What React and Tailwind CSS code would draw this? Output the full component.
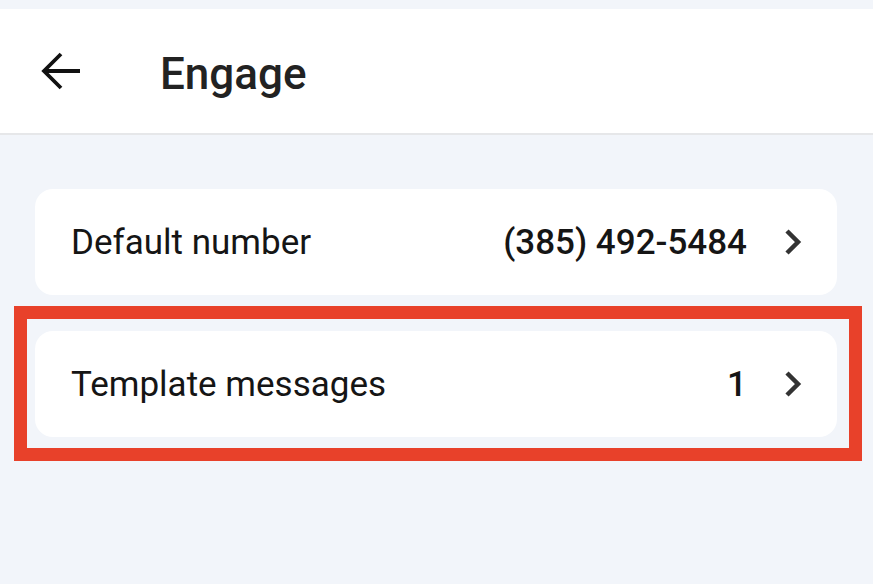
import React from "react";

function Chevron() {
  return (
    <svg width="18" height="28" viewBox="0 0 18 28" className="shrink-0">
      <path d="M3 3 L14 14 L3 25" fill="none" stroke="#333333" strokeWidth="4.5" strokeLinecap="butt" strokeLinejoin="miter" />
    </svg>
  );
}

function Row({ label, value }) {
  return (
    <div className="flex h-[106px] items-center rounded-[18px] bg-white pl-[36px] pr-[35px]">
      <span className="flex-1 pt-[3px] text-[35px] text-[#151515]">{label}</span>
      <span className="pt-[3px] text-[35px] font-medium text-[#151515]">{value}</span>
      <div className="ml-[37px] flex items-center">
        <Chevron />
      </div>
    </div>
  );
}

export default function App() {
  return (
    <div className="h-[584px] w-[873px] overflow-hidden bg-[#f2f5fa] pt-[9px] font-['Roboto',sans-serif]">
      <header className="flex h-[126px] items-center border-b-2 border-[#e6e7e9] bg-white">
        <svg width="40" height="40" viewBox="0 0 40 40" className="ml-[41px]">
          <path d="M39 20 H4 M20 3 L3 20 L20 37" fill="none" stroke="#111111" strokeWidth="3.8" strokeLinejoin="miter" />
        </svg>
        <h1 className="ml-[79px] mt-[5px] text-[44px] font-medium text-[#222222]">Engage</h1>
      </header>
      <main className="flex flex-col gap-[36px] pl-[35px] pr-[36px] pt-[54px]">
        <Row label="Default number" value="(385) 492-5484" />
        <div className="relative">
          <Row label="Template messages" value="1" />
          <div className="pointer-events-none absolute left-[-21px] right-[-25px] top-[-25px] bottom-[-24px] border-[13px] border-[#e8412a]" />
        </div>
      </main>
    </div>
  );
}
